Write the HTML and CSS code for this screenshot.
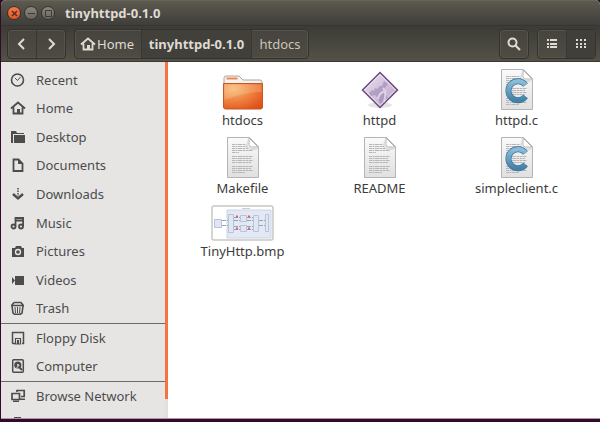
FILE: index.html
```html
<!DOCTYPE html>
<html lang="en">
  <head>
    <meta charset="UTF-8">
    <title>tinyhttpd-0.1.0</title>
    <link rel="stylesheet" href="styles.css">
  </head>
  <body>
    <!-- shared shapes -->
    <svg class="defs" width="0" height="0">
      <defs>
        <linearGradient id="paper" x1="0" y1="0" x2="0" y2="1">
          <stop offset="0" stop-color="#fafafa"/>
          <stop offset="1" stop-color="#e0e0e0"/>
        </linearGradient>
        <linearGradient id="blue" x1="0" y1="0" x2="0" y2="1">
          <stop offset="0" stop-color="#8cbcd8"/>
          <stop offset="1" stop-color="#4381a8"/>
        </linearGradient>
        <radialGradient id="orange" cx="0.25" cy="0.2" r="1">
          <stop offset="0" stop-color="#f7bd7c"/>
          <stop offset="0.5" stop-color="#ee8040"/>
          <stop offset="1" stop-color="#e04a14"/>
        </radialGradient>
        <linearGradient id="violet" x1="0" y1="0" x2="1" y2="1">
          <stop offset="0" stop-color="#e9e1ef"/>
          <stop offset="1" stop-color="#b9a2c8"/>
        </linearGradient>
        <symbol id="house" viewBox="0 0 16 16">
          <path d="M1 8.5 8 2.5l7 6M3.5 7.5v6h9v-6" fill="none" stroke="currentColor" stroke-width="1.8"/>
          <path d="M7 9h3v5H7z" fill="currentColor"/>
        </symbol>
        <symbol id="page" viewBox="0 0 34 41">
          <path d="M1.5.5h22l9 9v31h-31z" fill="url(#paper)" stroke="#b4b4b4"/>
          <path d="M23 1v6.5q0 2.5 2.5 2.5H32z" fill="#fff" stroke="#b4b4b4"/>
          <path d="M22 2v6q0 3 3 3h7l-2 2h-6q-4-1-4-5z" fill="#aaa" opacity="0.3"/>
          <path d="M6 7.5h14M6 9.5h15M6 11.5h16M6 13.5h21M6 15.5h7M6 19.5h21M6 21.5h19M6 23.5h21M6 25.5h19M6 29.5h21M6 31.5h19M6 33.5h21M6 35.5h13" stroke="#b6b6b6" stroke-dasharray="3 .5 2 .5 4 .5"/>
        </symbol>
        <symbol id="source" viewBox="0 0 34 41">
          <use href="#page"/>
          <path d="M25.5 16a9.500 9.500 0 1 0 0 11.500" fill="none" stroke="#3b749b" stroke-width="6"/>
          <path d="M25.5 16a9.500 9.500 0 1 0 0 11.500" fill="none" stroke="url(#blue)" stroke-width="4.600"/>
        </symbol>
      </defs>
    </svg>

    <div class="window">
      <header class="titlebar">
        <button class="control close" aria-label="Close"><svg width="7" height="7"><path d="M1 1l5 5M6 1 1 6" stroke="#55321f" stroke-width="1.5"/></svg></button>
        <button class="control" aria-label="Minimize"><svg width="7" height="7"><path d="M0 3.5h7" stroke="#3c3b37"/></svg></button>
        <button class="control" aria-label="Maximize"><svg width="7" height="7"><path d="M.5.5h6v6h-6z" fill="none" stroke="#3c3b37"/></svg></button>
        <h1>tinyhttpd-0.1.0</h1>
      </header>

      <nav class="toolbar">
        <div class="group">
          <button class="square" aria-label="Back"><svg width="16" height="16"><path d="M10 3 5 8l5 5" fill="none" stroke="currentColor" stroke-width="2"/></svg></button>
          <button class="square" aria-label="Forward"><svg width="16" height="16"><path d="M6 3l5 5-5 5" fill="none" stroke="currentColor" stroke-width="2"/></svg></button>
        </div>
        <div class="group path">
          <button class="home"><svg width="16" height="16"><use href="#house"/></svg>Home</button>
          <button class="current">tinyhttpd-0.1.0</button>
          <button class="child">htdocs</button>
        </div>
        <div class="group search">
          <button class="square" aria-label="Search"><svg width="16" height="16"><circle cx="6.5" cy="6.5" r="4" fill="none" stroke="currentColor" stroke-width="2"/><path d="M9.5 9.5 14 14" stroke="currentColor" stroke-width="2.2"/></svg></button>
        </div>
        <div class="group">
          <button class="square" aria-label="List view"><svg width="16" height="16" fill="currentColor"><path d="M3 3h2v2H3zM6 3h7v2H6zM3 7h2v2H3zM6 7h7v2H6zM3 10h2v2H3zM6 10h7v2H6z"/></svg></button>
          <button class="square pressed" aria-label="Icon view"><svg width="16" height="16" fill="currentColor"><path d="M3 3h2v2H3zM7 3h2v2H7zM11 3h2v2h-2zM3 7h2v2H3zM7 7h2v2H7zM11 7h2v2h-2zM3 10h2v2H3zM7 10h2v2H7zM11 10h2v2h-2z"/></svg></button>
        </div>
      </nav>

      <div class="content">
        <aside class="sidebar">
          <ul class="places main">
            <li><a href="#"><svg width="16" height="16"><circle cx="7.5" cy="8" r="6" fill="none" stroke="currentColor" stroke-width="1.6"/><path d="M5 6l2.500 2.500L10.500 5" fill="none" stroke="currentColor"/></svg>Recent</a></li>
            <li><a href="#"><svg width="16" height="16"><use href="#house"/></svg>Home</a></li>
            <li><a href="#"><svg width="16" height="16" fill="currentColor"><path d="M1 2h5l1 2h7v1H3v9H1z"/><path d="M4 6h11v8H4z"/></svg>Desktop</a></li>
            <li><a href="#"><svg width="16" height="16"><path d="M3.5 2.500h5l4 4V14h-9z" fill="none" stroke="currentColor" stroke-width="1.8"/><path d="M8 2v5h5z" fill="currentColor"/></svg>Documents</a></li>
            <li><a href="#"><svg width="16" height="16"><path d="M8 2v8" stroke="currentColor" stroke-width="1.5" stroke-dasharray="1.5 1"/><path d="M3 8l5 4.500L13 8" fill="none" stroke="currentColor" stroke-width="2.4"/></svg>Downloads</a></li>
            <li><a href="#"><svg width="16" height="16" fill="none" stroke="currentColor" stroke-width="1.8"><circle cx="3.5" cy="11.500" r="2"/><circle cx="11" cy="11.500" r="2"/><path d="M5.500 11.500V3h7.600v8.500M6 5.500h7"/></svg>Music</a></li>
            <li><a href="#"><svg width="16" height="16"><path d="M2 5h3l1-2h5l1 2h2v9H2z" fill="currentColor"/><circle cx="8" cy="9" r="2.500" fill="none" stroke="#e7e5e4" stroke-width="1.4"/></svg>Pictures</a></li>
            <li><a href="#"><svg width="16" height="16" fill="currentColor"><path d="M5 4h9v9H5zM2 5l3 3.500L2 12z"/></svg>Videos</a></li>
            <li><a href="#"><svg width="16" height="16" fill="none" stroke="currentColor"><path d="M1 5.500h13M4 2.500h7l2 2.500M2 5l2-2.500" stroke-width="1.6"/><path d="M2 6l1 7 1.500 1.200h6L12 13l1-7" stroke-width="1.6"/><path d="M5 7l.5 6M7.500 7v6M10 7l-.5 6"/></svg>Trash</a></li>
          </ul>
          <ul class="places devices">
            <li><a href="#"><svg width="16" height="16"><path d="M5 13.500H3L2.500 13V2.500h11v11H12" fill="none" stroke="currentColor" stroke-width="1.5"/><path d="M5.500 14V8.500h5V14z" fill="none" stroke="currentColor" stroke-width="1.2"/><path d="M7 10h2v4H7z" fill="currentColor"/></svg>Floppy Disk</a></li>
            <li><a href="#"><svg width="16" height="16"><rect x="2.700" y="1.700" width="10.600" height="12.600" rx="1" fill="none" stroke="currentColor" stroke-width="1.5"/><circle cx="7.800" cy="7" r="3.600" fill="currentColor"/><circle cx="8" cy="7" r="1" fill="#e7e5e4"/><path d="M8.500 8.500 12 12" stroke="currentColor" stroke-width="2"/><path d="M6.500 10 9 7.500" stroke="#e7e5e4"/></svg>Computer</a></li>
          </ul>
          <ul class="places network">
            <li><a href="#"><svg width="16" height="16"><path d="M7 4V2.500h7.200v6H11M2 5.500h7.500v6H2z" fill="none" stroke="currentColor" stroke-width="1.7"/><path d="M3 12.500h6V14H3zM10 10.500h5V12h-5z" fill="currentColor"/></svg>Browse Network</a></li>
            <li><a href="#" aria-label="Connect to Server"><svg width="16" height="16" fill="currentColor"><path d="M4 1h7v6H4zM2 10h12v4H2z"/></svg></a></li>
          </ul>
        </aside>
        <div class="edge"></div>

        <main class="files">
          <figure>
            <svg width="42" height="41">
              <path d="M2 35V9q0-2 2-2h13l4 4h17q2 0 2 2v22z" fill="#f3f2f0" stroke="#aaa69f"/>
              <path d="M4.500 9.500h11" stroke="#f08a50" stroke-width="2"/>
              <path d="M1.500 14.500h39V38q0 2-2 2h-35q-2 0-2-2z" fill="url(#orange)" stroke="#c95623"/>
              <path d="M2.500 15.500h37V23Q22 23 2.500 31z" fill="#ffd9a8" opacity="0.25"/>
            </svg>
            <figcaption>htdocs</figcaption>
          </figure>
          <figure>
            <svg width="42" height="41">
              <ellipse cx="21" cy="36" rx="12" ry="3" fill="#e4e4e4"/>
              <path d="M21 3.500 38.500 21 21 38.500 3.500 21z" fill="url(#violet)" stroke="#6c4a80" stroke-width="1.5"/>
              <path d="M21 5.500 36.500 21 21 36.500 5.500 21z" fill="none" stroke="#fff" opacity="0.6"/>
              <path d="M10 24l3-3 2 1 1-3 3 1 1-3h3l2-5 4 3-3 4v6l3 4-8 6-2-6-3-3-4 1z" fill="#947aab" opacity="0.5"/>
              <path d="M25 33q3-10-1-14M19 30q1-6 7-8" fill="none" stroke="#eee8f2" stroke-width="2" opacity="0.7"/>
            </svg>
            <figcaption>httpd</figcaption>
          </figure>
          <figure><svg width="34" height="41"><use href="#source"/></svg><figcaption>httpd.c</figcaption></figure>
          <figure><svg width="34" height="41"><use href="#page"/></svg><figcaption>Makefile</figcaption></figure>
          <figure><svg width="34" height="41"><use href="#page"/></svg><figcaption>README</figcaption></figure>
          <figure><svg width="34" height="41"><use href="#source"/></svg><figcaption>simpleclient.c</figcaption></figure>
          <figure>
            <svg width="64" height="36">
              <rect x="1" y="1" width="61" height="34" rx="2" fill="#fff" stroke="#c9c8c0" stroke-width="1.5"/>
              <path d="M16 5h44v28H16z" fill="#e3e8f5" stroke="#cdd4e4"/>
              <path d="M31 3.500h8" stroke="#ccc"/>
              <g fill="#dfe6f5" stroke="#b9c3d6">
                <path d="M3.500 14.500h7v8h-7zM17.500 9.500h5v18h-5zM29.500 10.500h6v6h-6zM29.500 20.500h6v6h-6zM42.500 10.500h5v16h-5zM54.500 9.500h3v17h-3z"/>
              </g>
              <path d="M11 15.500h6M11 20.500h6M23 12.500h6M23 15.500h6M23 21.500h6M23 24.500h6M36 12.500h6M36 15.500h6M36 21.500h6M36 24.500h6M48 15.500h6M48 20.500h6" stroke="#9aa1b0" stroke-dasharray="4 1"/>
              <path d="M25 11.500h2M25 23.500h2M37 11.500h2M37 23.500h2" stroke="#dc5c6c" stroke-width="2"/>
            </svg>
            <figcaption>TinyHttp.bmp</figcaption>
          </figure>
        </main>
      </div>
    </div>
  </body>
</html>
```

FILE: styles.css
```css
* {
  box-sizing: border-box;
}

body {
  font-family: "Noto Sans", "Open Sans", sans-serif;
  font-size: 13px;
  height: 100vh;
  margin: 0;
  padding: 0 0 3px 1px;
  overflow: hidden;
  background-color: #35082e;
}

.defs {
  position: absolute;
}

svg {
  display: block;
  flex-shrink: 0;
}

button {
  margin: 0;
  padding: 0;
  border: none;
  background: none;
  font: inherit;
  color: inherit;
}

.window {
  display: flex;
  flex-direction: column;
  height: 100%;
  overflow: hidden;
  border-radius: 5px 5px 0 0;
  border-bottom: 1px solid #a69ca4;
  background-color: #fff;
}

.titlebar {
  display: flex;
  flex-shrink: 0;
  align-items: center;
  gap: 3px;
  height: 25px;
  padding-left: 6px;
  border-top: 1px solid #67645a;
  background: linear-gradient(#5c594f, #3f3e3a);
  color: #dfdbd2;
}

.titlebar h1 {
  margin: 0 0 0 7px;
  font-size: 13px;
  font-weight: bold;
}

.control {
  display: flex;
  align-items: center;
  justify-content: center;
  width: 14px;
  height: 14px;
  border: 1px solid #34332f;
  border-radius: 50%;
  background: linear-gradient(#8b887f, #66645c);
}

.close {
  background: linear-gradient(#f6794f, #e8551f);
}

.toolbar {
  display: flex;
  flex-shrink: 0;
  align-items: center;
  gap: 8px;
  height: 37px;
  padding: 0 4px 0 6px;
  border-top: 1px solid #373632;
  border-bottom: 1px solid #3a3934;
  background: linear-gradient(#3c3b37, #545147);
  color: #dfdbd2;
}

.group {
  display: flex;
  height: 30px;
  border: 1px solid #33322e;
  border-radius: 4px;
  background: linear-gradient(#46443e, #4d4b43);
  box-shadow: inset 0 0 0 1px #56544b;
}

.group button {
  display: flex;
  align-items: center;
  justify-content: center;
}

.group button + button {
  border-left: 1px solid #383733;
}

.group .square {
  width: 28px;
}

.group .square + .square {
  width: 29px;
}

.group .home {
  justify-content: flex-start;
  gap: 1px;
  width: 66px;
  padding-left: 5px;
}

.group .current {
  width: 110px;
  background-color: #42403b;
  font-weight: bold;
}

.group .child {
  width: 57px;
  color: #c9c5bb;
}

.group .pressed {
  border-radius: 0 3px 3px 0;
  background-color: #403f39;
}

.search {
  margin-left: auto;
}

.content {
  display: flex;
  flex: 1;
  min-height: 0;
}

.sidebar {
  width: 164px;
  flex-shrink: 0;
  overflow: hidden;
  padding-top: 4px;
  background-color: #e7e5e4;
  color: #4c4c4c;
}

.places {
  display: grid;
  grid-auto-rows: 1fr;
  margin: 0;
  padding: 0;
  list-style: none;
}

.main {
  height: 257px;
}

.devices {
  height: 58px;
}

.network {
  height: 58px;
}

.places + .places {
  border-top: 1px solid #6a6a69;
}

.places a {
  display: flex;
  align-items: center;
  gap: 10px;
  height: 100%;
  padding: 0 0 1px 9px;
  color: inherit;
  text-decoration: none;
  white-space: nowrap;
}

/* scroll position marker between the two panes */
.edge {
  width: 3px;
  flex-shrink: 0;
  margin-bottom: 19px;
  background-color: #f4733f;
  box-shadow: 0 19px #e2e0df;
}

.files {
  display: grid;
  flex: 1;
  grid-template-columns: repeat(auto-fill, 137px);
  align-content: start;
  row-gap: 7px;
  padding: 7px 0 0 6px;
  color: #3c3c3c;
}

figure {
  display: flex;
  flex-direction: column;
  align-items: center;
  margin: 0;
}

figcaption {
  line-height: 20px;
}
```
